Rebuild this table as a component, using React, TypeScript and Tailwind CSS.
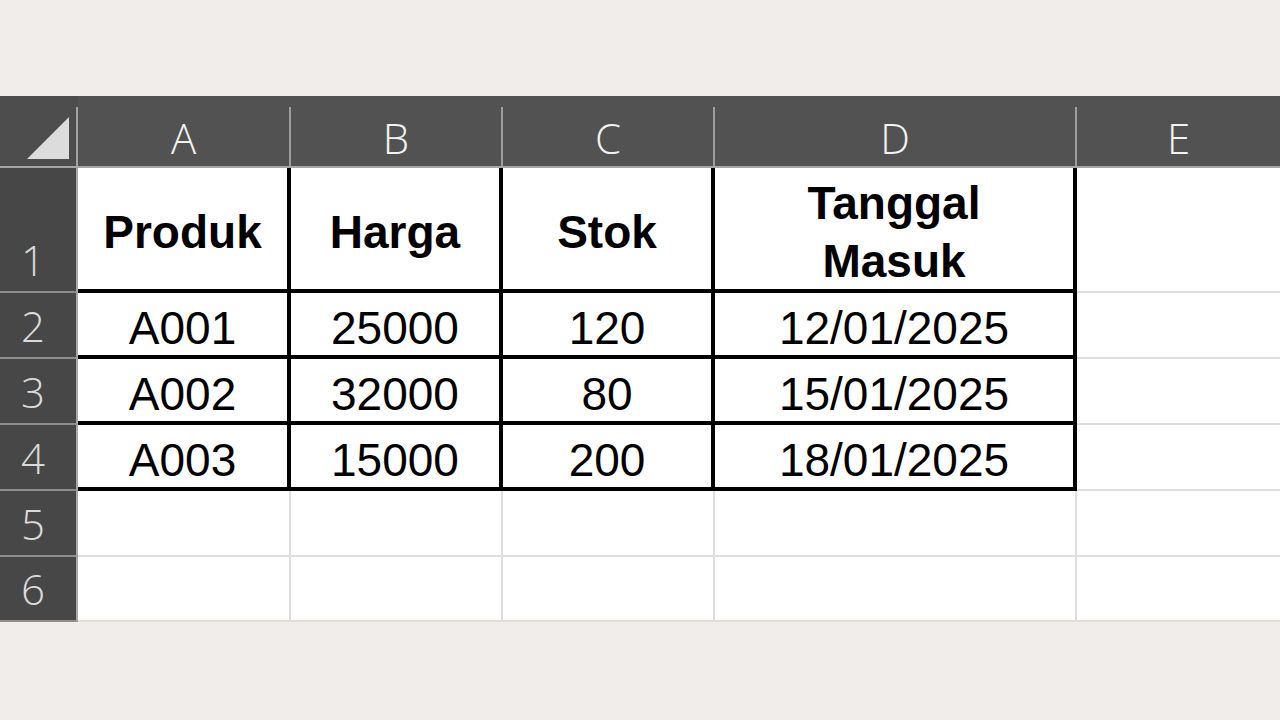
import React from 'react';

const COLS = ['A', 'B', 'C', 'D', 'E'];

const ROWS: string[][] = [
  ['Produk', 'Harga', 'Stok', 'Tanggal\nMasuk'],
  ['A001', '25000', '120', '12/01/2025'],
  ['A002', '32000', '80', '15/01/2025'],
  ['A003', '15000', '200', '18/01/2025'],
  ['', '', '', ''],
  ['', '', '', ''],
];

const headFont = { fontFamily: '"Open Sans", "Noto Sans", sans-serif' };
const cellFont = { fontFamily: '"Liberation Sans", Arial, sans-serif' };

export default function App() {
  return (
    <div className="min-h-screen w-full bg-[#f1edeb] pt-[96px]">
      <div className="grid grid-cols-[78px_213px_212px_212px_362px_1fr] grid-rows-[72px_125px_66px_66px_66px_66px_65px]">
        {/* corner */}
        <div className="flex flex-col bg-[#4d4d4d] border-b-2 border-[#a6a6a6]">
          <div className="mt-[11px] flex-1 border-r-2 border-[#a2a2a2] flex items-end">
            <svg width="76" height="59" viewBox="0 0 76 59" className="block">
              <polygon points="27,52 69,10 69,52" fill="#dcdcdc" />
            </svg>
          </div>
        </div>

        {/* column letters */}
        {COLS.map((c, i) => (
          <div key={c} className="flex flex-col bg-[#525252] border-b-2 border-[#a6a6a6]">
            <div
              className={`mt-[11px] flex-1 flex items-end justify-center pb-[7px] ${
                i < COLS.length - 1 ? 'border-r-2 border-[#9e9e9e]' : ''
              }`}
            >
              <span className="text-[42px] font-light leading-none text-[#f2f2f2]" style={headFont}>
                {c}
              </span>
            </div>
          </div>
        ))}

        {ROWS.map((row, r) => (
          <React.Fragment key={r}>
            {/* row number */}
            <div className="flex items-end justify-center pr-[10px] pb-[10px] bg-[#474747] border-r-2 border-b-2 border-r-[#a8a8a8] border-b-[#8e8e8e]">
              <span className="text-[42px] font-light leading-none text-[#dadada]" style={headFont}>
                {r + 1}
              </span>
            </div>

            {row.map((val, c) => {
              const inTable = r < 4;
              return (
                <div
                  key={c}
                  className={`flex items-center justify-center bg-white text-center text-black ${
                    r === 0 ? 'pt-[6px] font-bold' : 'pt-2'
                  } ${
                    inTable
                      ? 'border-r-4 border-b-4 border-black'
                      : 'border-r-2 border-b-2 border-[#dedede]'
                  }`}
                  style={cellFont}
                >
                  <span className="whitespace-pre-line text-[46px] leading-[58px]">{val}</span>
                </div>
              );
            })}

            {/* column E */}
            <div className="bg-white border-b-2 border-[#dedede]" />
          </React.Fragment>
        ))}
      </div>
    </div>
  );
}
